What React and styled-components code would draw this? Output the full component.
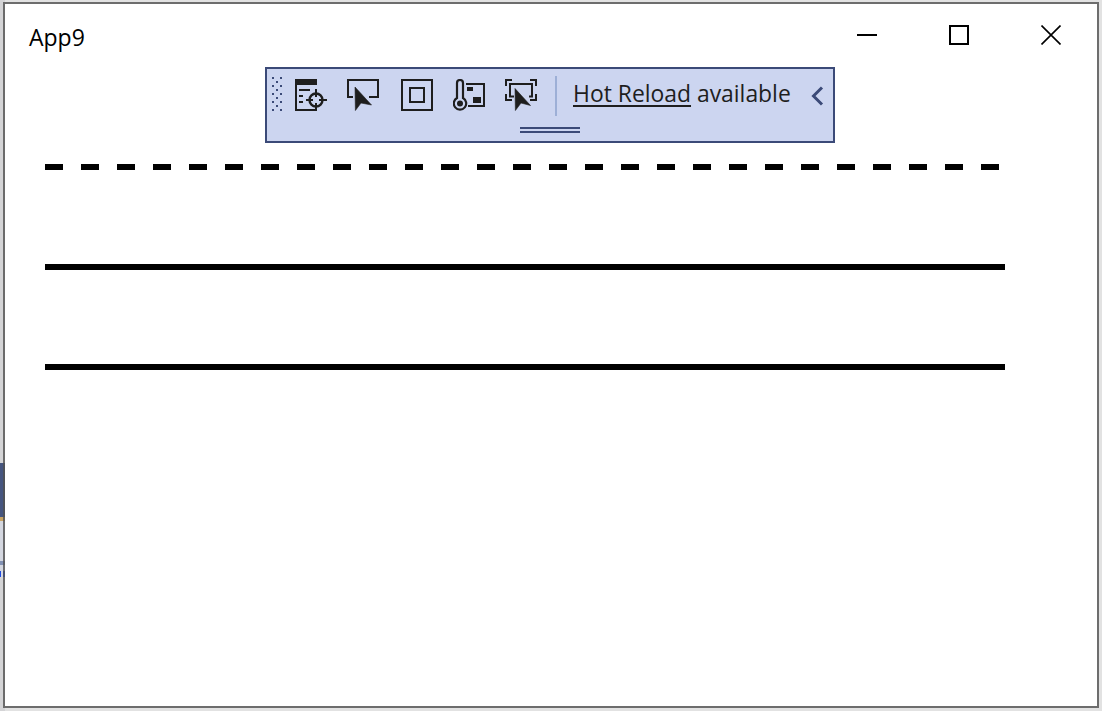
import React from 'react';
import styled, { createGlobalStyle } from 'styled-components';

const GlobalStyle = createGlobalStyle`
    html, body {
        margin: 0;
        padding: 0;
        background: #fff;
        overflow: hidden;
    }
`;

const Desktop = styled.div`
    display: flex;
    width: 1102px;
    height: 711px;
    background: #e2e2e2;
`;

const BehindStrip = styled.div`
    width: 5px;
    display: flex;
    flex-direction: column;
    flex-shrink: 0;
    background: #d4d4d6;
`;

const StripBand = styled.div`
    height: ${(p) => p.$h}px;
    background: ${(p) => p.$color};
`;

const Window = styled.div`
    position: relative;
    flex: 1;
    margin: 2px 3px 3px -2px;
    border: 2px solid rgba(80, 80, 80, 0.8);
    background: #fff;
    background-clip: padding-box;
    display: flex;
    flex-direction: column;
`;

const TitleBar = styled.div`
    height: 62px;
    display: flex;
    align-items: center;
    justify-content: space-between;
    padding-left: 24px;
`;

const Title = styled.div`
    font-family: "Open Sans", "Noto Sans", sans-serif;
    font-size: 23px;
    color: #000;
    padding-top: 3px;
`;

const Controls = styled.div`
    display: flex;
`;

const ControlButton = styled.div`
    width: 92px;
    height: 62px;
    display: flex;
    align-items: center;
    justify-content: center;
    margin-top: -1px;
`;

const Canvas = styled.div`
    display: flex;
    flex-direction: column;
    gap: 94px;
    padding: 98px 0 0 40px;
`;

const Line = styled.div`
    width: 960px;
    height: 6px;
    background: ${(p) =>
        p.$dashed
            ? 'repeating-linear-gradient(to right, #000 0, #000 18px, transparent 18px, transparent 36px)'
            : '#000'};
`;

const Toolbar = styled.div`
    position: absolute;
    top: 63px;
    left: 260px;
    width: 570px;
    height: 76px;
    box-sizing: border-box;
    border: 2px solid #3b4a78;
    background: #ccd5f0;
    display: flex;
    flex-direction: column;
    align-items: center;
`;

const ToolRow = styled.div`
    align-self: stretch;
    height: 58px;
    display: flex;
    align-items: flex-start;
    padding: 8px 0 0 5px;
    box-sizing: border-box;
`;

const Tools = styled.div`
    display: flex;
    gap: 20px;
    margin: 2px 0 0 12px;
`;

const ToolIcon = styled.svg`
    display: block;
    width: 32px;
    height: 32px;
    margin-right: ${(p) => (p.$extra ? 2 : 0)}px;
`;

const Separator = styled.div`
    width: 2px;
    height: 40px;
    margin: -1px 16px 0 18px;
    background: #9dafd6;
`;

const Status = styled.div`
    font-family: "Open Sans", "Noto Sans", sans-serif;
    font-size: 22.9px;
    line-height: 34px;
    color: #1e1e1e;
    white-space: nowrap;
    width: 238px;
    flex-shrink: 0;
`;

const StatusLink = styled.span`
    text-decoration: underline;
    text-decoration-thickness: 1.5px;
    text-underline-offset: 3px;
`;

const Handle = styled.div`
    width: 60px;
    height: 6px;
    border-top: 2px solid #3b4a78;
    border-bottom: 2px solid #3b4a78;
    box-sizing: border-box;
`;

const Chevron = styled.svg`
    display: block;
    flex-shrink: 0;
    width: 13px;
    height: 20px;
    margin: 9px 0 0 0;
`;

const ink = '#1e1e1e';

const Gripper = () => (
    <svg width="11" height="35" style={{ display: 'block', flexShrink: 0 }}>
        {[0, 8, 16, 24, 32].map((y) => (
            <g key={y} fill="#3b4a78">
                <rect x="0" y={y} width="2" height="2" />
                <rect x="8" y={y} width="2" height="2" />
                {y < 32 && <rect x="4" y={y + 4} width="2" height="2" />}
            </g>
        ))}
    </svg>
);

const Arrow = ({ d }) => <path d={d} fill={ink} stroke={ink} strokeWidth="0.6" />;

const Toolkit = () => (
    <Tools>
        <ToolIcon viewBox="0 0 32 32" fill="none">
            <rect x="0" y="0" width="22" height="6" fill={ink} />
            <path d="M1 6V31H20" stroke={ink} strokeWidth="2" />
            <path d="M4 11H15M4 17H8M4 23H8" stroke={ink} strokeWidth="2" />
            <circle cx="21" cy="21" r="6.5" stroke={ink} strokeWidth="2.4" />
            <path d="M21 10V18M21 24V32M11 21H18M24 21H32" stroke={ink} strokeWidth="2" />
        </ToolIcon>
        <ToolIcon $extra viewBox="0 0 32 32" fill="none">
            <path d="M6 18H1V1H31V18H22" stroke={ink} strokeWidth="2" />
            <Arrow d="M8 8L8.4 31.5L14 24L24.5 26Z" />
        </ToolIcon>
        <ToolIcon viewBox="0 0 32 32" fill="none">
            <rect x="1" y="1" width="30" height="30" stroke={ink} strokeWidth="2" />
            <rect x="9" y="9" width="14" height="14" stroke={ink} strokeWidth="2" />
        </ToolIcon>
        <ToolIcon viewBox="0 0 32 32" fill="none">
            <path
                d="M4 19V4a3 3 0 0 1 6 0V19a6.2 6.2 0 1 1 -6 0Z"
                stroke={ink}
                strokeWidth="2.2"
            />
            <circle cx="7" cy="24.5" r="3" fill={ink} />
            <path d="M13 5H31V27H15" stroke={ink} strokeWidth="2" />
            <rect x="14" y="8" width="6" height="4" fill={ink} />
            <rect x="20" y="18" width="8" height="6" fill={ink} />
        </ToolIcon>
        <ToolIcon viewBox="0 0 32 32" fill="none">
            <path
                d="M7 1H1V7M25 1H31V7M1 15V21H7M31 15V21H25"
                stroke={ink}
                strokeWidth="2"
            />
            <path d="M9 17.5H5V5H27V17.5H24" stroke={ink} strokeWidth="2" />
            <Arrow d="M10 9.5L10.4 31.5L16 24L25.5 26.5Z" />
        </ToolIcon>
    </Tools>
);

export default function App() {
    return (
        <>
            <GlobalStyle />
            <Desktop>
                <BehindStrip>
                    <StripBand $h={463} $color="#d4d4d6" />
                    <StripBand $h={54} $color="#46557f" />
                    <StripBand $h={4} $color="#c9a464" />
                    <StripBand $h={40} $color="#d4d7e0" />
                    <StripBand $h={4} $color="#8291b4" />
                    <StripBand $h={6} $color="#d4d7e0" />
                    <StripBand
                        $h={6}
                        $color="linear-gradient(to right, #1f4be0 0 1px, #d4d7e0 1px 3px, #1f4be0 3px)"
                    />
                </BehindStrip>
                <Window>
                    <TitleBar>
                        <Title>App9</Title>
                        <Controls>
                            <ControlButton>
                                <svg width="20" height="20" viewBox="0 0 20 20">
                                    <rect x="0" y="9" width="20" height="2" fill="#000" />
                                </svg>
                            </ControlButton>
                            <ControlButton>
                                <svg width="20" height="20" viewBox="0 0 20 20" fill="none">
                                    <rect x="1" y="1" width="18" height="18" stroke="#000" strokeWidth="2" />
                                </svg>
                            </ControlButton>
                            <ControlButton>
                                <svg width="20" height="20" viewBox="0 0 20 20" fill="none">
                                    <path d="M0.5 0.5L19.5 19.5M19.5 0.5L0.5 19.5" stroke="#000" strokeWidth="1.6" />
                                </svg>
                            </ControlButton>
                        </Controls>
                    </TitleBar>
                    <Canvas>
                        <Line $dashed />
                        <Line />
                        <Line />
                    </Canvas>
                    <Toolbar>
                        <ToolRow>
                            <Gripper />
                            <Toolkit />
                            <Separator />
                            <Status>
                                <StatusLink>Hot Reload</StatusLink> available
                            </Status>
                            <Chevron viewBox="0 0 13 20" fill="none">
                                <path d="M11 1.5L2.5 10L11 18.5" stroke="#3b4a78" strokeWidth="3" />
                            </Chevron>
                        </ToolRow>
                        <Handle />
                    </Toolbar>
                </Window>
            </Desktop>
        </>
    );
}
